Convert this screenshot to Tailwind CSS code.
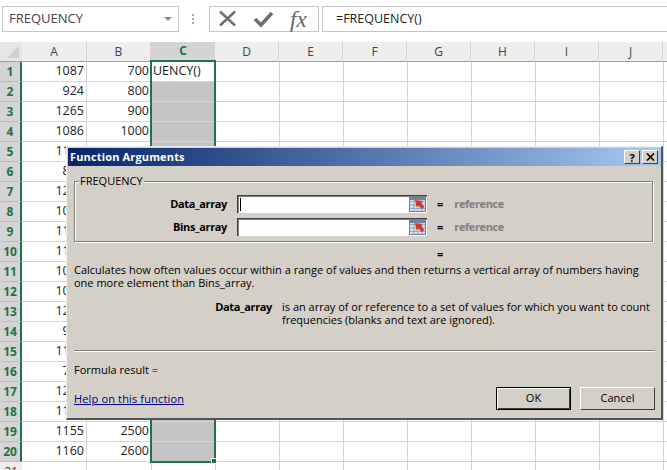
<!DOCTYPE html>
<html lang="en">
<head>
  <meta charset="UTF-8">
  <script src="https://cdn.jsdelivr.net/npm/@tailwindcss/browser@4"></script>
  <title>Function Arguments</title>
</head>
<body class="w-[667px] h-[470px] overflow-hidden bg-white relative font-['Open_Sans','Noto_Sans',sans-serif] text-[#222]">
  <!-- formula bar -->
  <div class="h-[42px] bg-white pt-[6px] flex items-start">
    <div class="w-[177px] h-[26px] ml-[2px] border border-[#c6c6c6] flex items-center justify-between pl-[6px] pr-[6px] text-[13px] text-[#444]">
      <span>FREQUENCY</span>
      <span class="w-0 h-0 border-x-[4px] border-x-transparent border-t-[4px] border-t-[#8a8a8a]"></span>
    </div>
    <div class="w-[6px] ml-[11px] mt-[8px] flex flex-col gap-[2px] items-center justify-center">
      <span class="w-[2px] h-[2px] bg-[#aaa]"></span>
      <span class="w-[2px] h-[2px] bg-[#aaa]"></span>
      <span class="w-[2px] h-[2px] bg-[#aaa]"></span>
    </div>
    <div class="w-[110px] h-[26px] ml-[13px] border border-[#c6c6c6] flex items-center">
      <svg class="ml-[8px]" width="20" height="18" viewBox="0 0 20 18"><path d="M2 1.5 L17 15.5 M17 1.5 L2 15.5" stroke="#6f6f6f" stroke-width="2.4" fill="none"/></svg>
      <svg class="ml-[15px]" width="21" height="18" viewBox="0 0 21 18"><path d="M2 9 L8 15 L19 3" stroke="#6f6f6f" stroke-width="3.6" fill="none"/></svg>
      <span class="ml-[16px] font-['Liberation_Serif',serif] italic text-[23px] leading-none text-[#666]">fx</span>
    </div>
    <div class="h-[26px] ml-[3px] flex-1 border-y border-l border-[#c6c6c6] flex items-center pl-[13px] text-[12.5px] text-[#222]">=FREQUENCY()</div>
  </div>

  <!-- column headers -->
  <div class="flex h-[20px] text-[12px] text-[#444]">
    <div class="w-[22px] bg-[#e6e6e6] border-b border-[#9f9f9f] relative overflow-hidden">
      <span class="absolute right-[3px] bottom-[3px] w-0 h-0 border-l-[12px] border-l-transparent border-b-[12px] border-b-[#d0d0d0]"></span>
    </div>
    <div class="w-[65px] bg-[#eeeeee] border-r border-b border-r-[#d4d4d4] border-b-[#9f9f9f] flex items-center justify-center">A</div>
    <div class="w-[64px] bg-[#eeeeee] border-r border-b border-r-[#d4d4d4] border-b-[#9f9f9f] flex items-center justify-center">B</div>
    <div class="w-[64px] bg-[#d4d4d4] border-b-2 border-[#217346] flex items-center justify-center font-bold text-[#217346]">C</div>
    <div class="w-[64px] bg-[#eeeeee] border-r border-b border-r-[#d4d4d4] border-b-[#9f9f9f] flex items-center justify-center">D</div>
    <div class="w-[64px] bg-[#eeeeee] border-r border-b border-r-[#d4d4d4] border-b-[#9f9f9f] flex items-center justify-center">E</div>
    <div class="w-[64px] bg-[#eeeeee] border-r border-b border-r-[#d4d4d4] border-b-[#9f9f9f] flex items-center justify-center">F</div>
    <div class="w-[64px] bg-[#eeeeee] border-r border-b border-r-[#d4d4d4] border-b-[#9f9f9f] flex items-center justify-center">G</div>
    <div class="w-[64px] bg-[#eeeeee] border-r border-b border-r-[#d4d4d4] border-b-[#9f9f9f] flex items-center justify-center">H</div>
    <div class="w-[64px] bg-[#eeeeee] border-r border-b border-r-[#d4d4d4] border-b-[#9f9f9f] flex items-center justify-center">I</div>
    <div class="w-[64px] bg-[#eeeeee] border-r border-b border-r-[#d4d4d4] border-b-[#9f9f9f] flex items-center justify-center">J</div>
    <div class="flex-1 bg-[#eeeeee] border-b border-[#9f9f9f]"></div>
  </div>

  <!-- sheet rows are generated; the classes below are all written out in full -->
  <div id="sheet" class="relative text-[12.5px] text-[#222]"></div>

  <!-- selection outline on column C -->
  <div class="absolute left-[150px] top-[60px] w-[66px] h-[403px] border-2 border-[#217346] pointer-events-none">
    <span class="absolute right-[-3px] bottom-[-3px] w-[6px] h-[6px] bg-[#217346] border border-white"></span>
  </div>

  <!-- Function Arguments dialog -->
  <div class="absolute left-[66px] top-[146px] w-[597px] h-[274px] bg-[#d4d0c8] border-t border-l border-t-[#eeeeee] border-l-[#eeeeee] border-r-2 border-b-2 border-r-[#555] border-b-[#555] pl-[1px] pt-[1px] text-[11px] text-black font-['Open_Sans',sans-serif]">
    <div class="h-[18px] bg-gradient-to-r from-[#0a246a] to-[#a6caf0] flex items-center justify-between pr-[3px]">
      <span class="ml-[2px] text-white font-bold tracking-[0.15px]">Function Arguments</span>
      <div class="flex gap-[2px]">
        <span class="w-[16px] h-[14px] bg-[#d4d0c8] border border-t-white border-l-white border-r-[#404040] border-b-[#404040] flex items-center justify-center font-bold text-[11px] leading-none">?</span>
        <span class="w-[16px] h-[14px] bg-[#d4d0c8] border border-t-white border-l-white border-r-[#404040] border-b-[#404040] flex items-center justify-center">
          <svg width="9" height="8" viewBox="0 0 9 8"><path d="M1 0.5 L8 7.5 M8 0.5 L1 7.5" stroke="#000" stroke-width="1.6" fill="none"/></svg>
        </span>
      </div>
    </div>

    <!-- argument group -->
    <div class="relative mt-[15px] ml-[6px] mr-[8px] h-[61px] border border-[#808080] shadow-[1px_1px_0_#fff,inset_1px_1px_0_#fff] pt-[13px]">
      <span class="absolute left-[4px] top-[-8px] bg-[#d4d0c8] px-[1px] leading-[14px]">FREQUENCY</span>
      <div class="flex items-center h-[18px] mb-[5px]">
        <span class="w-[152px] text-right font-bold tracking-[-0.35px]">Data_array</span>
        <div class="ml-[10px] w-[190px] h-[18px] bg-white border-t border-l border-t-[#404040] border-l-[#404040] shadow-[inset_1px_1px_0_#808080] flex items-center justify-between">
          <span class="ml-[2px] w-[1px] h-[13px] bg-black"></span>
          <svg width="17" height="15" viewBox="0 0 17 15" class="mr-[1px]"><rect x="0.5" y="0.5" width="16" height="14" fill="#d8dde6" stroke="#6f7f96"/><path d="M1 4.5 H16 M1 8 H16 M1 11.5 H16 M5 1 V14 M9 1 V14 M13 1 V14" stroke="#8d9db5" stroke-width="0.8"/><rect x="1" y="1" width="15" height="2" fill="#6d86ad"/><path d="M6 3 L13 4 L12.5 6.5 L15.5 10 L12.5 12 L9.5 8.5 L7.5 10 Z" fill="#d8362a"/></svg>
        </div>
        <span class="ml-[10px] font-bold">=</span>
        <span class="ml-[11px] font-bold tracking-[-0.4px] text-[#808080]">reference</span>
      </div>
      <div class="flex items-center h-[18px]">
        <span class="w-[152px] text-right font-bold tracking-[-0.35px]">Bins_array</span>
        <div class="ml-[10px] w-[190px] h-[18px] bg-white border-t border-l border-t-[#404040] border-l-[#404040] shadow-[inset_1px_1px_0_#808080] flex items-center justify-end">
          <svg width="17" height="15" viewBox="0 0 17 15" class="mr-[1px]"><rect x="0.5" y="0.5" width="16" height="14" fill="#d8dde6" stroke="#6f7f96"/><path d="M1 4.5 H16 M1 8 H16 M1 11.5 H16 M5 1 V14 M9 1 V14 M13 1 V14" stroke="#8d9db5" stroke-width="0.8"/><rect x="1" y="1" width="15" height="2" fill="#6d86ad"/><path d="M6 3 L13 4 L12.5 6.5 L15.5 10 L12.5 12 L9.5 8.5 L7.5 10 Z" fill="#d8362a"/></svg>
        </div>
        <span class="ml-[10px] font-bold">=</span>
        <span class="ml-[11px] font-bold tracking-[-0.4px] text-[#808080]">reference</span>
      </div>
    </div>

    <div class="h-[14px] mt-[5px] pl-[369px] font-bold leading-[14px]">=</div>
    <p class="ml-[6px] mt-[2px] w-[575px] leading-[13px]">Calculates how often values occur within a range of values and then returns a vertical array of numbers having one more element than Bins_array.</p>
    <div class="flex mt-[11px] leading-[13px]">
      <span class="w-[204px] text-right font-bold tracking-[-0.35px]">Data_array</span>
      <span class="ml-[10px] w-[375px]">is an array of or reference to a set of values for which you want to count frequencies (blanks and text are ignored).</span>
    </div>

    <div class="ml-[6px] mr-[6px] mt-[24px] h-[2px] border-t border-t-[#808080] border-b border-b-white"></div>
    <div class="ml-[6px] mt-[11px] leading-[14px]">Formula result =</div>
    <div class="flex items-end justify-between ml-[6px] mr-[6px] mt-[10px]">
      <a class="text-[#000080] underline leading-[14px] mb-[4px] tracking-[0.15px]">Help on this function</a>
      <div class="flex gap-[9px]">
        <button class="w-[75px] h-[23px] bg-[#d4d0c8] border border-black shadow-[inset_1px_1px_0_#fff,inset_-1px_-1px_0_#404040] text-[11px]">OK</button>
        <button class="w-[75px] h-[23px] bg-[#d4d0c8] border border-t-white border-l-white border-r-[#404040] border-b-[#404040] text-[11px]">Cancel</button>
      </div>
    </div>
  </div>

  <script>
    const a = [1087, 924, 1265, 1086, 1171, 854, 1203, 1096, 1124, 1145, 1063, 1088, 1210, 945, 1130, 766, 1202, 1147, 1155, 1160]
    const b = [700, 800, 900, 1000, 1100, 1200, 1300, 1400, 1500, 1600, 1700, 1800, 1900, 2000, 2100, 2200, 2300, 2400, 2500, 2600]
    const sheet = document.querySelector('#sheet')
    const emptyCols = ['w-[64px]', 'w-[64px]', 'w-[64px]', 'w-[64px]', 'w-[64px]', 'w-[64px]', 'w-[64px]']
    let html = ''
    for (let i = 0; i < 21; i++) {
      const last = i === 20
      const head = last ? 'text-[#444] bg-[#eeeeee] font-normal' : 'text-[#217346] bg-[#d4d4d4] font-bold border-r-2 border-r-[#217346]'
      const c = i === 0 ? 'UENCY()' : ''
      const cBg = (i > 0 && i < 20) ? 'bg-[#c4c4c4]' : 'bg-white'
      html += `<div class="flex h-[20px]">
        <div class="w-[22px] flex items-center justify-center border-b border-b-[#bdbdbd] text-[12px] ${head}">${i + 1}</div>
        <div class="w-[65px] pr-[2px] flex items-center justify-end border-r border-b border-[#d4d4d4]">${a[i] || ''}</div>
        <div class="w-[64px] pr-[2px] flex items-center justify-end border-b border-[#d4d4d4]">${b[i] || ''}</div>
        <div class="w-[64px] pl-[1px] flex items-center border-l border-b border-[#d4d4d4] whitespace-nowrap ${cBg}">${c}</div>
        ${emptyCols.map(w => `<div class="${w} border-l border-b border-[#d4d4d4]"></div>`).join('')}
        <div class="flex-1 border-l border-b border-[#d4d4d4]"></div>
      </div>`
    }
    sheet.innerHTML = html
  </script>
</body>
</html>
